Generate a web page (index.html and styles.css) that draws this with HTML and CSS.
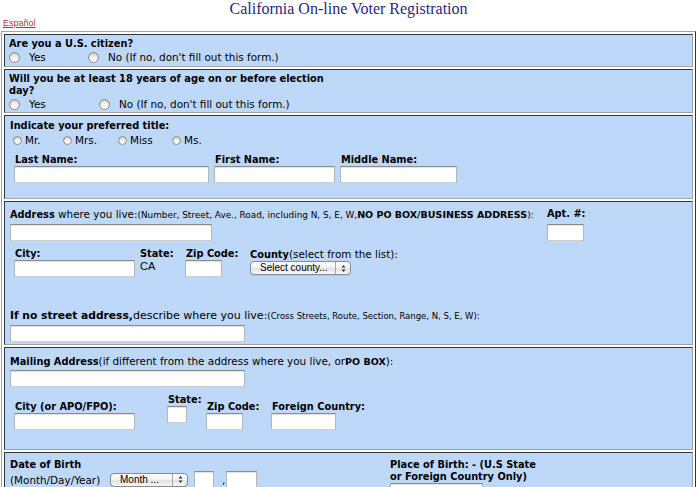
FILE: index.html
```html
<!DOCTYPE html>
<html lang="en">
<head>
<meta charset="utf-8">
<title>California On-line Voter Registration</title>
<link rel="stylesheet" href="styles.css">
</head>
<body>
<h1 class="page-title">California On-line Voter Registration</h1>
<a class="lang-link" href="#">Español</a>
<form class="reg-form">
  <section class="cell cell-citizen">
    <div class="q">Are you a U.S. citizen?</div>
    <div class="opt-row">
      <label class="opt opt-yes1"><input type="radio" class="radio" name="citizen">Yes</label>
      <label class="opt"><input type="radio" class="radio" name="citizen">No (If no, don't fill out this form.)</label>
    </div>
  </section>

  <section class="cell cell-age">
    <div class="q q-wrap">Will you be at least 18 years of age on or before election day?</div>
    <div class="opt-row">
      <label class="opt opt-yes2"><input type="radio" class="radio" name="age">Yes</label>
      <label class="opt"><input type="radio" class="radio" name="age">No (If no, don't fill out this form.)</label>
    </div>
  </section>

  <section class="cell cell-name">
    <div class="q">Indicate your preferred title:</div>
    <div class="title-row">
      <label class="topt topt-mr"><input type="radio" class="radio radio-sm" name="title">Mr.</label>
      <label class="topt topt-mrs"><input type="radio" class="radio radio-sm" name="title">Mrs.</label>
      <label class="topt topt-miss"><input type="radio" class="radio radio-sm" name="title">Miss</label>
      <label class="topt"><input type="radio" class="radio radio-sm" name="title">Ms.</label>
    </div>
    <div class="name-grid">
      <label class="fld"><span class="lbl">Last Name:</span><input type="text" class="tf tf-last"></label>
      <label class="fld"><span class="lbl">First Name:</span><input type="text" class="tf tf-first"></label>
      <label class="fld"><span class="lbl">Middle Name:</span><input type="text" class="tf tf-middle"></label>
    </div>
  </section>

  <section class="cell cell-addr">
    <div class="addr-grid">
      <div class="addr-main">
        <div class="line nowrap"><b class="b">Address</b> where you live:<span class="note">(Number, Street, Ave., Road, including N, S, E, W,<b class="b-sm">NO PO BOX/BUSINESS ADDRESS</b>):</span></div>
        <input type="text" class="tf tf-addr">
      </div>
      <div class="addr-apt">
        <div class="line b">Apt. #:</div>
        <input type="text" class="tf tf-apt">
      </div>
    </div>
    <div class="city-grid">
      <label class="fld"><span class="lbl">City:</span><input type="text" class="tf tf-city"></label>
      <div class="fld"><span class="lbl">State:</span><span class="state-val">CA</span></div>
      <label class="fld"><span class="lbl">Zip Code:</span><input type="text" class="tf tf-zip"></label>
      <div class="fld">
        <span class="lbl-plain"><b class="b">County</b>(select from the list):</span>
        <span class="popup popup-county"><span class="popup-text">Select county...</span><span class="popup-arrows"><svg width="5" height="9" viewBox="0 0 5 9"><path d="M0.5 3.5 L2.5 1 L4.5 3.5 Z M0.5 5.5 L2.5 8 L4.5 5.5 Z" fill="#333"/></svg></span></span>
      </div>
    </div>
    <div class="line nostreet nowrap"><b class="b">If no street address,</b>describe where you live:<span class="note">(Cross Streets, Route, Section, Range, N, S, E, W):</span></div>
    <input type="text" class="tf tf-wide">
  </section>

  <section class="cell cell-mail">
    <div class="line nowrap"><b class="b">Mailing Address</b>(if different from the address where you live, or<b class="b-sm">PO BOX</b>):</div>
    <input type="text" class="tf tf-wide">
    <div class="mail-grid">
      <label class="fld"><span class="lbl">City (or APO/FPO):</span><input type="text" class="tf tf-city"></label>
      <label class="fld fld-raised"><span class="lbl">State:</span><input type="text" class="tf tf-st"></label>
      <label class="fld"><span class="lbl">Zip Code:</span><input type="text" class="tf tf-zip2"></label>
      <label class="fld"><span class="lbl">Foreign Country:</span><input type="text" class="tf tf-country"></label>
    </div>
  </section>

  <section class="cell cell-birth">
    <div class="birth-grid">
      <div class="dob">
        <div class="line b">Date of Birth</div>
        <div class="dob-row">
          <span class="dob-hint">(Month/Day/Year)</span>
          <span class="popup popup-month"><span class="popup-text">Month ...</span><span class="popup-arrows"><svg width="5" height="9" viewBox="0 0 5 9"><path d="M0.5 3.5 L2.5 1 L4.5 3.5 Z M0.5 5.5 L2.5 8 L4.5 5.5 Z" fill="#333"/></svg></span></span>
          <input type="text" class="tf tf-day">
          <span class="comma">,</span>
          <input type="text" class="tf tf-year">
        </div>
      </div>
      <div class="pob">
        <div class="pob-label b">Place of Birth: - (U.S State or Foreign Country Only)</div>
        <input type="text" class="tf tf-pob">
      </div>
    </div>
  </section>
</form>
</body>
</html>
```

FILE: styles.css
```css
html, body {
  padding: 0;
}
body {
  margin: 0 2px 0 1px;
  background: #ffffff;
  color: #000000;
  font-family: "DejaVu Sans", Verdana, sans-serif;
  font-size: 10.4px;
  line-height: 12px;
  overflow: hidden;
}

.page-title {
  margin: 1px 0 0;
  font-family: "Liberation Serif", "Times New Roman", serif;
  font-weight: normal;
  font-size: 16px;
  line-height: 16px;
  color: #1f2a7c;
  text-align: center;
}

.lang-link {
  display: block;
  margin: 1px 0 0 2px;
  font-family: "Liberation Sans", Arial, sans-serif;
  font-size: 9px;
  line-height: 10px;
  color: #b0381c;
  text-decoration: underline;
  width: max-content;
}

.reg-form {
  margin: 3px 0 0;
  border: 1px solid;
  border-color: #a3a3a3 #353535 #353535 #a3a3a3;
  padding: 2px;
  display: flex;
  flex-direction: column;
  gap: 2px;
}

.cell {
  background: #bed8fa;
  border: 1px solid;
  border-color: #353535 #a3a3a3 #a3a3a3 #353535;
  padding: 2px 4px;
}

.b, .q, .lbl {
  font-weight: bold;
  font-size: 9.8px;
}
.b-sm {
  font-weight: bold;
  font-size: 9.5px;
}
.note {
  font-size: 8.9px;
}
b.b, .b-sm, .note {
  line-height: 10px;
}

.q, .line {
  line-height: 12px;
}

.nowrap {
  white-space: nowrap;
}

/* radios */
.radio {
  -webkit-appearance: none;
  appearance: none;
  box-sizing: border-box;
  width: 11px;
  height: 11px;
  margin: 0 9px 0 0;
  border-radius: 50%;
  border: 1px solid #8f8f8f;
  background: radial-gradient(circle at 50% 75%, #ffffff 0, #f3f3f3 35%, #d2d2d2 100%);
  box-shadow: inset 0 1px 1px rgba(0, 0, 0, 0.12);
  vertical-align: -2px;
}
.radio-sm {
  width: 9px;
  height: 9px;
  margin-right: 3px;
  vertical-align: -1px;
}

.opt-row {
  display: flex;
  height: 12px;
  line-height: 12px;
  margin-top: 1px;
}
.opt {
  white-space: nowrap;
  line-height: 12px;
}
.opt-yes1 { width: 79px; }
.opt-yes2 { width: 90px; }

.cell-citizen {
  padding-top: 3px;
  padding-bottom: 3px;
}
.cell-age {
  padding-top: 3px;
  padding-bottom: 2px;
}
.q-wrap {
  width: 330px;
}

/* title / name */
.cell-name {
  padding: 4px 5px 0;
  height: 84px;
  box-sizing: border-box;
}
.title-row {
  display: flex;
  height: 12px;
  margin: 2px 0 0 3px;
  line-height: 12px;
}
.topt { white-space: nowrap; }
.topt-mr { width: 50px; }
.topt-mrs { width: 55px; }
.topt-miss { width: 54px; }

.name-grid {
  display: grid;
  grid-template-columns: 195px 121px 117px;
  column-gap: 5px;
  margin: 8px 0 0 4px;
}

.fld {
  display: flex;
  flex-direction: column;
  align-items: flex-start;
}
.lbl {
  line-height: 12px;
  padding-left: 1px;
}

.tf {
  box-sizing: border-box;
  height: 17px;
  margin: 0;
  padding: 0 2px;
  background: #ffffff;
  border: 1px solid;
  border-color: #8a8a8a #b6b6b6 #cdcdcd #b6b6b6;
  box-shadow: inset 0 1px 1px rgba(0, 0, 0, 0.12);
  font: 10px "DejaVu Sans", sans-serif;
}
.tf-last { width: 195px; }
.tf-first { width: 121px; }
.tf-middle { width: 117px; }
.tf-addr { width: 202px; margin-top: 4px; }
.tf-apt { width: 37px; margin-top: 4px; }
.tf-city { width: 121px; }
.tf-zip { width: 37px; }
.tf-zip2 { width: 37px; }
.tf-st { width: 20px; }
.tf-country { width: 65px; }
.tf-wide { width: 235px; display: block; margin-top: 3px; }
.tf-day { width: 20px; margin-left: 6px; }
.tf-year { width: 31px; margin-left: 1px; }
.tf-pob { width: 93px; }

/* address */
.cell-addr {
  padding: 6px 5px 2px;
}
.addr-grid {
  display: grid;
  grid-template-columns: 537px auto;
}
.addr-main, .addr-apt {
  display: flex;
  flex-direction: column;
  align-items: flex-start;
}
.city-grid {
  display: grid;
  grid-template-columns: 125px 46px 65px auto;
  margin: 7px 0 0 4px;
}
.state-val {
  font-family: "Liberation Sans", Arial, sans-serif;
  font-size: 11px;
  line-height: 13px;
  padding-left: 1px;
}
.lbl-plain {
  line-height: 12px;
  white-space: nowrap;
}
.nostreet {
  margin-top: 33px;
  font-size: 11px;
}
.nostreet b.b {
  font-size: 10.7px;
}
.nostreet .note {
  font-size: 8.5px;
}

/* popup button */
.popup {
  box-sizing: border-box;
  display: inline-flex;
  align-items: center;
  height: 14px;
  border: 1px solid #8c8c8c;
  border-radius: 4px;
  background: linear-gradient(#ffffff 0%, #f4f4f4 45%, #e2e2e2 55%, #f6f6f6 100%);
  box-shadow: 0 1px 0 rgba(0, 0, 0, 0.08);
  font-family: "Liberation Sans", Arial, sans-serif;
  font-size: 10px;
  line-height: 12px;
  overflow: hidden;
}
.popup-county {
  width: 101px;
  margin-top: 1px;
}
.popup-month {
  width: 78px;
  flex: none;
}
.popup-text {
  flex: 1;
  padding-left: 9px;
  white-space: nowrap;
}
.popup-arrows {
  width: 14px;
  height: 100%;
  border-left: 1px solid #a6a6a6;
  display: flex;
  align-items: center;
  justify-content: center;
}
.popup-arrows svg {
  display: block;
}

/* mailing */
.cell-mail {
  padding: 7px 5px 0;
  height: 103px;
  box-sizing: border-box;
}
.mail-grid {
  display: grid;
  grid-template-columns: 153px 39px 65px auto;
  margin: 7px 0 0 4px;
  align-items: end;
}
.fld-raised {
  margin-bottom: 7px;
}

/* birth */
.cell-birth {
  padding: 6px 5px 4px;
}
.birth-grid {
  display: grid;
  grid-template-columns: 380px 185px;
}
.dob-row {
  display: flex;
  align-items: center;
  height: 17px;
}
.dob-hint {
  width: 100px;
  flex: none;
  white-space: nowrap;
}
.comma {
  width: 3px;
  margin-left: 8px;
}
.pob {
  display: flex;
  flex-direction: column;
  align-items: flex-start;
}
.pob-label {
  width: 152px;
  line-height: 12px;
}
```
